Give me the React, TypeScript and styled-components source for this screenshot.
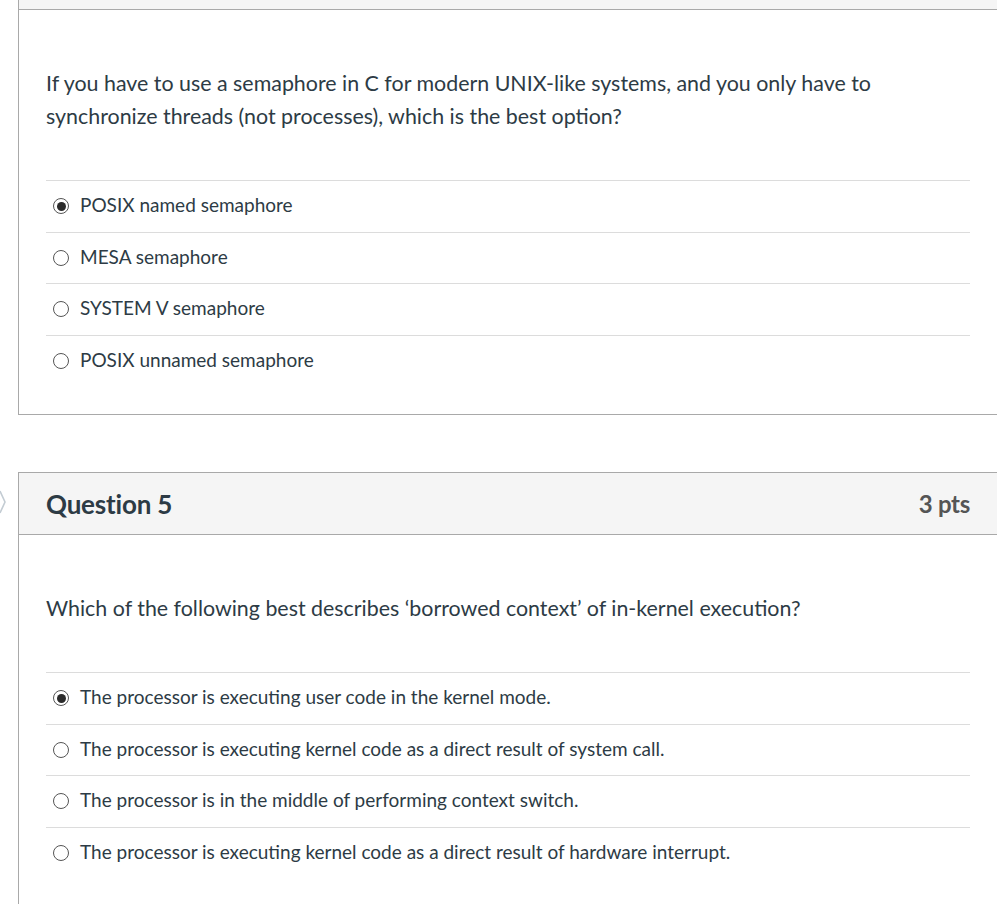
import React from "react";
import styled, { createGlobalStyle } from "styled-components";

const Global = createGlobalStyle`
  html, body { margin: 0; padding: 0; background: #fff; overflow: hidden; }
  body { font-family: Lato, "Open Sans", "Liberation Sans", sans-serif; color: #2d3b45; }
`;

const Page = styled.div`
  width: 997px;
  overflow: hidden;
`;

const Row = styled.div<{ $top?: number }>`
  display: flex;
  align-items: flex-start;
  margin-top: ${(p) => p.$top ?? 0}px;
`;

const Gutter = styled.div`
  width: 18px;
  flex: 0 0 18px;
  display: flex;
  justify-content: flex-start;
  padding-top: 17px;
`;

const Card = styled.div<{ $open?: boolean }>`
  flex: 1 1 auto;
  margin-right: -2px;
  border: 1px solid #a9a9a9;
  border-top: ${(p) => (p.$open ? "none" : "1px solid #a9a9a9")};
  border-bottom: ${(p) => (p.$open ? "1px solid #a9a9a9" : "none")};
`;

const Header = styled.div<{ $h: number }>`
  height: ${(p) => p.$h}px;
  background: #f5f5f5;
  border-bottom: 1px solid #a9a9a9;
  display: flex;
  align-items: center;
  justify-content: space-between;
  padding: 0 28px 0 27px;
  box-sizing: border-box;
`;

const Title = styled.h2`
  margin: 0;
  font-size: 26px;
  font-weight: 700;
  color: #2d3b45;
  letter-spacing: -0.2px;
`;

const Points = styled.span`
  font-size: 24px;
  font-weight: 700;
  color: #555;
  letter-spacing: -0.3px;
`;

const Body = styled.div<{ $bottom?: number }>`
  padding: 57px 28px ${(p) => p.$bottom ?? 28}px 27px;
`;

const Question = styled.p`
  margin: 0 0 47px 0;
  font-size: 21.4px;
  line-height: 33px;
  color: #2d3b45;
`;

const Answers = styled.div`
  display: flex;
  flex-direction: column;
`;

const Answer = styled.label`
  display: flex;
  align-items: center;
  gap: 11px;
  border-top: 1px solid #dcdcdc;
  padding: 12px 0 14.5px 7px;
  font-size: 19px;
  line-height: 24px;
  color: #2d3b45;
`;

const Radio = styled.span<{ $checked?: boolean }>`
  width: 16px;
  height: 16px;
  border-radius: 50%;
  border: 1.2px solid #555;
  box-sizing: border-box;
  display: inline-flex;
  align-items: center;
  justify-content: center;
  flex: 0 0 16px;
  margin-top: 2px;
  background: #fff;
  &::after {
    content: "";
    width: 9px;
    height: 9px;
    border-radius: 50%;
    background: ${(p) => (p.$checked ? "#2b2b2b" : "transparent")};
  }
`;

const q4 = [
  "POSIX named semaphore",
  "MESA semaphore",
  "SYSTEM V semaphore",
  "POSIX unnamed semaphore",
];

const q5 = [
  "The processor is executing user code in the kernel mode.",
  "The processor is executing kernel code as a direct result of system call.",
  "The processor is in the middle of performing context switch.",
  "The processor is executing kernel code as a direct result of hardware interrupt.",
];

export default function App() {
  return (
    <Page>
      <Global />
      <Row>
        <Gutter />
        <Card $open>
          <Header $h={10} />
          <Body>
            <Question>
              If you have to use a semaphore in C for modern UNIX-like systems, and you only have to
              synchronize threads (not processes), which is the best option?
            </Question>
            <Answers>
              {q4.map((a, i) => (
                <Answer key={a}>
                  <Radio $checked={i === 0} />
                  {a}
                </Answer>
              ))}
            </Answers>
          </Body>
        </Card>
      </Row>
      <Row $top={57}>
        <Gutter>
          <svg width="8" height="26" viewBox="0 0 8 26">
            <polyline points="0,2 5,13 0,24" fill="none" stroke="#c3ccd3" strokeWidth="1.6" />
          </svg>
        </Gutter>
        <Card>
          <Header $h={62}>
            <Title>Question 5</Title>
            <Points>3 pts</Points>
          </Header>
          <Body $bottom={60}>
            <Question>Which of the following best describes ‘borrowed context’ of in-kernel execution?</Question>
            <Answers>
              {q5.map((a, i) => (
                <Answer key={a}>
                  <Radio $checked={i === 0} />
                  {a}
                </Answer>
              ))}
            </Answers>
          </Body>
        </Card>
      </Row>
    </Page>
  );
}
